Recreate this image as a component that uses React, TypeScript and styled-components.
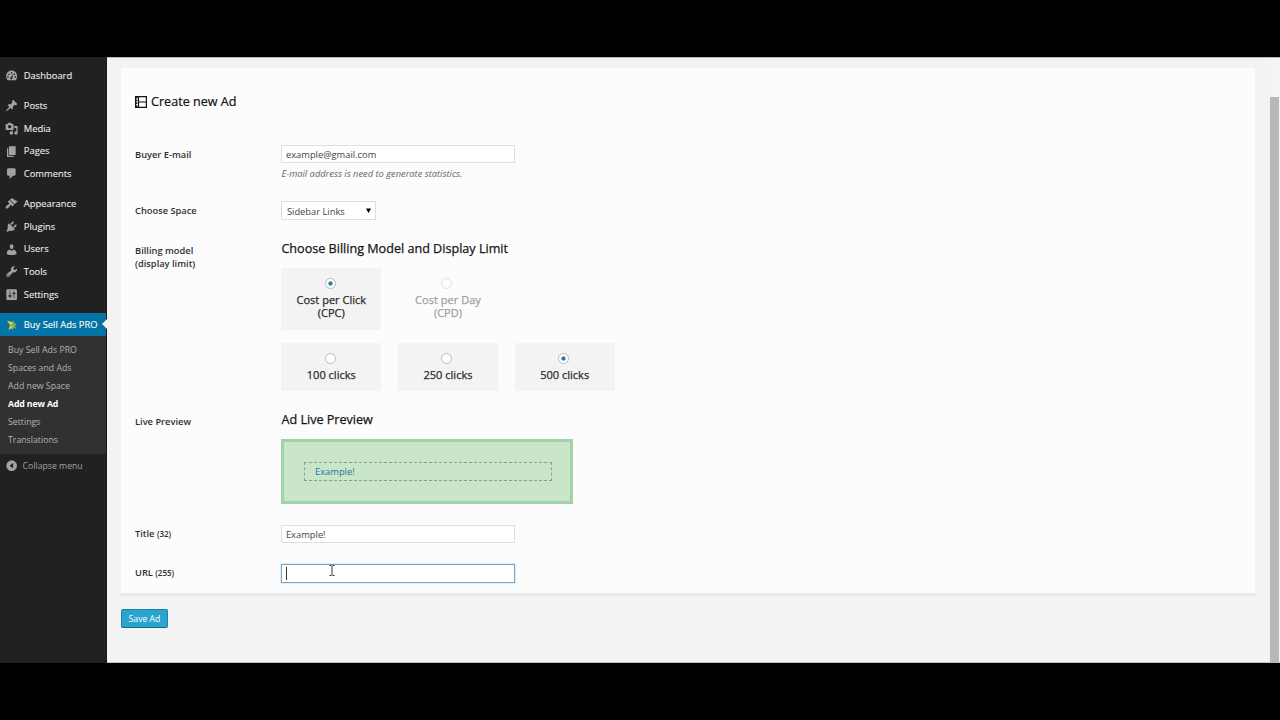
import React from "react";
import styled, { createGlobalStyle, css } from "styled-components";

const GlobalStyle = createGlobalStyle`
  * { box-sizing: border-box; }
  body { margin: 0; background: #000; overflow: hidden; }
  body, input, button { font-family: "Open Sans", "Noto Sans", sans-serif; }
`;

const Screen = styled.div`
  width: 1280px;
  height: 720px;
  padding: 57px 0;
  background: #000;
`;

const Admin = styled.div`
  display: flex;
  height: 606px;
  background: #f4f3f4;
  border-top: 1px solid #b9b9b9;
  border-bottom: 1px solid #c4c4c4;
`;

const Sidebar = styled.nav`
  width: 107px;
  flex: none;
  background: #212121;
  padding-top: 7.7px;
  border-right: 1px solid #191919;
  margin-top: -1px;
  margin-bottom: -1px;
`;

const MenuGroup = styled.div`
  margin-bottom: 7.3px;
`;

const MenuItem = styled.div<{ $active?: boolean }>`
  position: relative;
  display: flex;
  align-items: center;
  height: 22.7px;
  padding-left: 5.3px;
  gap: 5.2px;
  font-size: 9.4px;
  line-height: 12px;
  white-space: nowrap;
  color: #ececec;
  -webkit-text-stroke: 0.1px currentColor;
  ${(p) =>
    p.$active &&
    css`
      background: #0474a6;
      color: #fff;
      &::after {
        content: "";
        position: absolute;
        right: -1px;
        top: 6px;
        border: 5.3px solid transparent;
        border-left: 0;
        border-right-color: #f3f2f3;
      }
    `}
`;

const MenuIcon = styled.svg`
  width: 13.3px;
  height: 13.3px;
  flex: none;
  fill: #a2a2a2;
`;

const Submenu = styled.div`
  background: #323132;
  padding: 4.6px 0 5.6px 8px;
`;

const SubItem = styled.div<{ $current?: boolean }>`
  height: 18px;
  line-height: 18px;
  font-size: 8.75px;
  white-space: nowrap;
  color: ${(p) => (p.$current ? "#fff" : "#b2b2b2")};
  font-weight: ${(p) => (p.$current ? 700 : 400)};
  letter-spacing: ${(p) => (p.$current ? "-0.14px" : "0")};
`;

const Collapse = styled.div`
  display: flex;
  align-items: center;
  gap: 4px;
  height: 23px;
  padding-left: 5.3px;
  font-size: 8.7px;
  color: #a2a2a2;
`;

const Content = styled.main`
  flex: 1;
  padding: 10px 0 0 14px;
`;

const Panel = styled.section`
  width: 1134px;
  height: 525px;
  padding: 25px 14px 0;
  background: #fdfcfd;
  box-shadow: 0 3px 1px #e9e8e9;
`;

const PageTitle = styled.h2`
  display: flex;
  align-items: center;
  gap: 4px;
  margin: 0 0 26px;
  height: 17px;
  font-size: 12.6px;
  font-weight: 400;
  color: #111;
  -webkit-text-stroke: 0.2px currentColor;
`;

const Row = styled.div<{ $height: number }>`
  display: grid;
  grid-template-columns: 146.45px 1fr;
  height: ${(p) => p.$height}px;
`;

const Label = styled.label`
  padding-top: 12.9px;
  font-size: 9.3px;
  line-height: 12.7px;
  font-weight: 600;
  color: #303030;
  small { font-size: 8px; }
`;

const Cell = styled.div<{ $top?: number }>`
  padding-top: ${(p) => p.$top ?? 9}px;
`;

const TextInput = styled.input<{ $focused?: boolean }>`
  display: block;
  width: 234px;
  height: ${(p) => (p.$focused ? 19 : 18)}px;
  padding: 0 3.5px;
  outline: none;
  border: 1px solid ${(p) => (p.$focused ? "#79a6c4" : "#dedede")};
  box-shadow: ${(p) => (p.$focused ? "0 0 2px #a8cce0" : "none")};
  background: #fff;
  font-size: 9.33px;
  color: #444;
`;

const Hint = styled.p`
  margin: 5px 0 0;
  font-size: 9.3px;
  line-height: 12px;
  font-style: italic;
  color: #666;
`;

const Select = styled.div`
  display: flex;
  align-items: center;
  justify-content: space-between;
  width: 94.5px;
  height: 19px;
  padding: 1px 4px 0 4.5px;
  border: 1px solid #dedede;
  background: #fff;
  font-size: 9.33px;
  color: #444;
`;

const Heading = styled.h3`
  margin: 0 0 11px;
  font-size: 12.6px;
  line-height: 16px;
  font-weight: 400;
  color: #151515;
  -webkit-text-stroke: 0.25px currentColor;
`;

const Cards = styled.div`
  display: flex;
  gap: 17px;
  margin-bottom: 13px;
`;

const Card = styled.div<{ $tall?: boolean; $disabled?: boolean }>`
  display: flex;
  flex-direction: column;
  align-items: center;
  width: 99.7px;
  height: ${(p) => (p.$tall ? 62 : 48)}px;
  padding-top: 10px;
  background: ${(p) => (p.$disabled ? "transparent" : "#f4f3f4")};
  color: #2b2b2b;
  font-size: 11.05px;
  line-height: 13.4px;
  -webkit-text-stroke: 0.25px currentColor;
  text-align: center;
  & > * { opacity: ${(p) => (p.$disabled ? 0.45 : 1)}; }
`;

const Radio = styled.span<{ $checked?: boolean }>`
  width: 11px;
  height: 11px;
  margin: 0 2px 3.6px 0;
  border: 1px solid #bcbcbc;
  border-radius: 50%;
  background: ${(p) =>
    p.$checked ? "radial-gradient(circle, #1e7f9e 1.7px, #fff 2.5px)" : "#fff"};
`;

const Preview = styled.div`
  width: 292px;
  height: 65px;
  padding: 20px 19.6px;
  border: 3px solid #a2d3a8;
  background: #cae6ca;
`;

const PreviewAd = styled.div`
  width: 248px;
  height: 19px;
  padding-left: 10px;
  border: 1px dashed #83a689;
  font-size: 9.33px;
  line-height: 17px;
  color: #21759b;
`;

const FieldWrap = styled.div`
  position: relative;
  width: 234px;
`;

const Caret = styled.span`
  position: absolute;
  left: 5px;
  top: 3px;
  width: 1px;
  height: 13px;
  background: #333;
`;

const IBeam = styled.svg`
  position: absolute;
  left: 48px;
  top: 1px;
  width: 6px;
  height: 11px;
`;

const SaveButton = styled.button`
  display: block;
  width: 47px;
  height: 19px;
  margin-top: 16px;
  padding: 0;
  border: 1px solid #1c82ab;
  border-bottom-color: #14688b;
  border-radius: 2px;
  background: #2ba3cf;
  color: #fff;
  font-size: 8.67px;
  line-height: 16px;
`;

const Scrollbar = styled.div`
  width: 10px;
  padding-top: 39px;
  background: #f5f5f5;
`;

const ScrollThumb = styled.div`
  width: 9px;
  height: 566px;
  background: #b9b8b9;
`;

const icons = {
  dashboard:
    "M3.8 17h12.4c1.3-1.6 2-3.8 2-6C18.2 5.9 14.6 2.3 10 2.3S1.8 5.9 1.8 11c0 2.2.7 4.4 2 6zM9 5h2v2H9zM5 7h2v2H5zM13 7h2v2h-2zM3.5 11h2v2h-2zM14.5 11h2v2h-2zM8 13.5l3.3-5 .7.3-1.2 5.7c-.3 1.2-1.8 1.5-2.5.7-.4-.5-.5-1.1-.3-1.7z",
  posts:
    "M10.44 3.02l1.82-1.82 6.36 6.35-1.83 1.82c-1.05-.68-2.48-.57-3.41.36l-.75.75c-.92.93-1.04 2.35-.35 3.41l-1.83 1.82-2.41-2.41-2.8 2.79c-.42.42-3.38 2.71-3.8 2.29s1.86-3.39 2.28-3.81l2.79-2.79L4.1 9.36l1.83-1.82c1.05.69 2.48.57 3.4-.36l.75-.75c.93-.92 1.05-2.35.36-3.41z",
  media:
    "M13 11V4c0-.55-.45-1-1-1h-1.67L9 1H5L3.67 3H2c-.55 0-1 .45-1 1v7c0 .55.45 1 1 1h10c.55 0 1-.45 1-1zM7 4.500a2.500 2.500 0 1 0 0 5 2.500 2.500 0 0 0 0-5zM14 6h5v10.500c0 1.380-1.120 2.500-2.500 2.500S14 17.880 14 16.500s1.120-2.500 2.500-2.500c.17 0 .34.02.5.05V9h-3V6zm-4 8.050V13h2v3.500c0 1.380-1.120 2.500-2.500 2.500S7 17.880 7 16.500 8.120 14 9.500 14c.17 0 .34.02.5.05z",
  pages: "M6 15V2h10v13H6zm-1 1h8v2H3V5h2v11z",
  comments:
    "M5 2h9c1.1 0 2 .9 2 2v7c0 1.1-.9 2-2 2h-2l-5 5v-5H5c-1.1 0-2-.9-2-2V4c0-1.1.9-2 2-2z",
  appearance:
    "M14.48 11.06L7.41 3.99l1.5-1.5c.5-.56 2.3-.47 3.51.32 1.21.8 1.43 1.28 2.91 2.1 1.18.64 2.45 1.26 4.45.85zm-.71.71L6.7 4.7 4.93 6.47c-.39.39-.39 1.02 0 1.41l1.06 1.06c.39.39.39 1.03 0 1.42-.6.6-1.43 1.11-2.21 1.69-.35.26-.7.53-1.01.84C1.43 14.23.4 16.08 1.4 17.07c.99 1 2.84-.03 4.18-1.36.31-.31.58-.66.85-1.02.57-.78 1.08-1.61 1.69-2.21.39-.39 1.02-.39 1.41 0l1.06 1.06c.39.39 1.02.39 1.41 0z",
  plugins:
    "M13.11 4.36L9.87 7.6 8 5.73l3.24-3.24c.35-.34 1.05-.2 1.56.32.52.51.66 1.21.31 1.55zm-8 1.77l.91-1.12 9.01 9.01-1.19.84c-.71.71-2.63 1.16-3.82 1.16H6.14L4.9 17.26c-.59.59-1.54.59-2.12 0-.59-.58-.59-1.53 0-2.12l1.24-1.24v-3.88c0-1.13.4-3.19 1.09-3.89zm7.26 3.97l3.24-3.24c.34-.35 1.04-.21 1.55.31.52.51.66 1.21.31 1.55l-3.24 3.25z",
  users:
    "M10 9.25c-2.27 0-2.73-3.44-2.73-3.44C7 4.02 7.82 2 9.97 2c2.16 0 2.98 2.02 2.71 3.81 0 0-.41 3.44-2.68 3.44zm0 2.57L12.72 10c2.39 0 4.52 2.33 4.52 4.53v2.49s-3.65 1.13-7.24 1.13c-3.65 0-7.24-1.13-7.24-1.13v-2.49c0-2.25 1.94-4.48 4.47-4.48z",
  tools:
    "M16.68 9.77c-1.34 1.34-3.3 1.67-4.95.99l-5.41 6.52c-.99.99-2.59.99-3.58 0s-.99-2.59 0-3.57l6.52-5.42c-.68-1.65-.35-3.61.99-4.95 1.28-1.28 3.12-1.62 4.72-1.06l-2.89 2.89 2.82 2.82 2.86-2.87c.53 1.58.18 3.39-1.08 4.65zM3.81 16.21c.4.39 1.04.39 1.43 0 .4-.4.4-1.04 0-1.43-.39-.4-1.03-.4-1.43 0-.39.39-.39 1.03 0 1.43z",
  settings:
    "M18 16V4c0-1.1-.9-2-2-2H4c-1.1 0-2 .9-2 2v12c0 1.1.9 2 2 2h12c1.1 0 2-.9 2-2zM8 11h1c.55 0 1 .45 1 1s-.45 1-1 1H8v1.5c0 .28-.22.5-.5.5s-.5-.22-.5-.5V13H6c-.55 0-1-.45-1-1s.45-1 1-1h1V5.5c0-.28.22-.5.5-.5s.5.22.5.5V11zm5-2h-1c-.55 0-1-.45-1-1s.45-1 1-1h1V5.5c0-.28.22-.5.5-.5s.5.22.5.5V7h1c.55 0 1 .45 1 1s-.45 1-1 1h-1v5.5c0 .28-.22.5-.5.5s-.5-.22-.5-.5V9z",
  collapse:
    "M10 2a8 8 0 1 0 0 16 8 8 0 0 0 0-16zM12.3 6v8L6.8 10z",
};

type IconName = keyof typeof icons;

const Icon = ({ name }: { name: IconName }) => (
  <MenuIcon viewBox="0 0 20 20">
    <path d={icons[name]} fillRule="evenodd" />
  </MenuIcon>
);

const groups: [IconName, string][][] = [
  [["dashboard", "Dashboard"]],
  [
    ["posts", "Posts"],
    ["media", "Media"],
    ["pages", "Pages"],
    ["comments", "Comments"],
  ],
  [
    ["appearance", "Appearance"],
    ["plugins", "Plugins"],
    ["users", "Users"],
    ["tools", "Tools"],
    ["settings", "Settings"],
  ],
];

const submenu = ["Buy Sell Ads PRO", "Spaces and Ads", "Add new Space", "Add new Ad", "Settings", "Translations"];

const limits = ["100 clicks", "250 clicks", "500 clicks"];

export default function App() {
  return (
    <Screen>
      <GlobalStyle />
      <Admin>
        <Sidebar>
          {groups.map((group, i) => (
            <MenuGroup key={i}>
              {group.map(([icon, label]) => (
                <MenuItem key={label}>
                  <Icon name={icon} />
                  {label}
                </MenuItem>
              ))}
            </MenuGroup>
          ))}
          <MenuItem $active>
            <MenuIcon viewBox="0 0 20 20">
              <path d="M3 4l8 2 2-3 1 5 4 1-3 2.500 2 4.500-4-1.500-2 3.500-2-2.500-4 3 2.500-6z" fill="#7fae55" />
              <path d="M3 4l8 2.500-1 4z" fill="#e6d94b" />
              <path d="M5 17.500l3-6 3 1-2 3z" fill="#d8dc55" />
            </MenuIcon>
            Buy Sell Ads PRO
          </MenuItem>
          <Submenu>
            {submenu.map((label) => (
              <SubItem key={label} $current={label === "Add new Ad"}>
                {label}
              </SubItem>
            ))}
          </Submenu>
          <Collapse>
            <Icon name="collapse" />
            Collapse menu
          </Collapse>
        </Sidebar>

        <Content>
          <Panel>
            <PageTitle>
              <svg width="12" height="12" viewBox="0 0 12 12" fill="none" stroke="#111">
                <path d="M.6 .6h10.800v10.800H.6zM3.500 .6v10.800" strokeWidth="1.200" />
                <path d="M3.500 6h7.800" strokeWidth="1" />
                <path d="M1.700 1v10" strokeWidth="1.400" strokeDasharray="1.500 1.300" />
              </svg>
              Create new Ad
            </PageTitle>

            <Row $height={56}>
              <Label>Buyer E-mail</Label>
              <Cell>
                <TextInput defaultValue="example@gmail.com" />
                <Hint>E-mail address is need to generate statistics.</Hint>
              </Cell>
            </Row>

            <Row $height={40}>
              <Label>Choose Space</Label>
              <Cell>
                <Select>
                  Sidebar Links
                  <svg width="5" height="6" viewBox="0 0 5 6">
                    <path d="M0 .5h5L2.500 5z" />
                  </svg>
                </Select>
              </Cell>
            </Row>

            <Row $height={171}>
              <Label>
                Billing model
                <br />
                (display limit)
              </Label>
              <Cell $top={9}>
                <Heading>Choose Billing Model and Display Limit</Heading>
                <Cards>
                  <Card $tall>
                    <Radio $checked />
                    <span>Cost per Click<br />(CPC)</span>
                  </Card>
                  <Card $tall $disabled>
                    <Radio />
                    <span>Cost per Day<br />(CPD)</span>
                  </Card>
                </Cards>
                <Cards>
                  {limits.map((label) => (
                    <Card key={label}>
                      <Radio $checked={label === "500 clicks"} />
                      <span>{label}</span>
                    </Card>
                  ))}
                </Cards>
              </Cell>
            </Row>

            <Row $height={112}>
              <Label>Live Preview</Label>
              <Cell $top={9}>
                <Heading>Ad Live Preview</Heading>
                <Preview>
                  <PreviewAd>Example!</PreviewAd>
                </Preview>
              </Cell>
            </Row>

            <Row $height={39}>
              <Label>
                Title <small>(32)</small>
              </Label>
              <Cell $top={10}>
                <TextInput defaultValue="Example!" />
              </Cell>
            </Row>

            <Row $height={39}>
              <Label>
                URL <small>(255)</small>
              </Label>
              <Cell $top={10}>
                <FieldWrap>
                  <TextInput $focused />
                  <Caret />
                  <IBeam viewBox="0 0 6 11" fill="none" stroke="#333">
                    <path d="M.5 .5h2M3.500 .5h2M3 1v9M.5 10.500h2M3.500 10.500h2" />
                  </IBeam>
                </FieldWrap>
              </Cell>
            </Row>
          </Panel>
          <SaveButton>Save Ad</SaveButton>
        </Content>

        <Scrollbar>
          <ScrollThumb />
        </Scrollbar>
      </Admin>
    </Screen>
  );
}
